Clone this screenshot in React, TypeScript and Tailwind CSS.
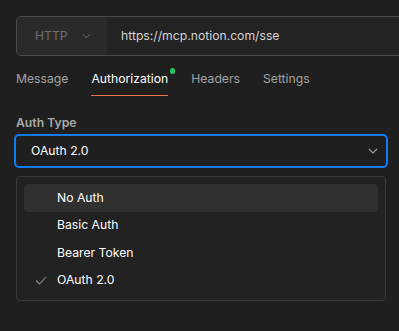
import React from 'react';

const tabs = ['Message', 'Authorization', 'Headers', 'Settings'];
const authOptions = ['No Auth', 'Basic Auth', 'Bearer Token', 'OAuth 2.0'];

function Chevron({ className }: { className?: string }) {
  return (
    <svg viewBox="0 0 10 6" className={className} fill="none" stroke="currentColor" strokeWidth="1.1">
      <path d="M1 1l4 4 4-4" />
    </svg>
  );
}

export default function App() {
  const selected = 'OAuth 2.0';
  const hovered = 'No Auth';

  return (
    <div className="w-[399px] h-[331px] overflow-hidden bg-[#1f1f1f] text-[12.2px] leading-[18px] font-['Inter',sans-serif]">
      <div className="pl-4 pt-4">
        {/* request bar */}
        <div className="flex h-[40px] w-[420px] rounded-[5px] border border-[#4b4b4b] overflow-hidden">
          <div className="flex w-[90px] items-center gap-[14px] bg-[#2a2a2a] pl-[18px] text-[#6e6e6e]">
            <span>HTTP</span>
            <Chevron className="w-[9px] h-[6px]" />
          </div>
          <div className="flex flex-1 items-center bg-[#232323] pl-[14px] text-[#d4d4d4]">
            https://mcp.notion.com/sse
          </div>
        </div>

        {/* tabs */}
        <div className="mt-[14px] flex gap-[23px] h-[26px]">
          {tabs.map((t) => {
            const active = t === 'Authorization';
            return (
              <div key={t} className="relative flex flex-col">
                <span className={active ? 'text-white' : 'text-[#a3a3a3]'}>{t}</span>
                {active && (
                  <>
                    <span className="mt-auto h-[1.5px] w-full bg-[#e8744c]" />
                    <span className="absolute -right-[7px] top-[-2px] h-[5.5px] w-[5.5px] rounded-full bg-[#22c55e]" />
                  </>
                )}
              </div>
            );
          })}
        </div>
      </div>

      <div className="px-[14px] pt-[18px]">
        <div className="pl-[2px] text-[12.2px] font-semibold text-[#a8a8a8]">Auth Type</div>
        <div className="mt-[2px] flex h-[34px] w-[374px] items-center justify-between rounded-[5px] border-2 border-[#0b7cf5] bg-[#1f1f1f] pl-[15px] pr-[8px] text-white">
          <span>{selected}</span>
          <Chevron className="w-[10px] h-[6px] text-[#a0a0a0]" />
        </div>

        <div className="ml-[2px] mt-[8px] w-[370px] rounded-[4px] border border-[#3a3a3a] bg-[#222222] px-[7px] pt-[7px] pb-[6px]">
          {authOptions.map((o) => (
            <div
              key={o}
              className={`flex h-[27.5px] items-center rounded-[4px] ${o === hovered ? 'bg-[#303030]' : ''}`}
            >
              <span className="flex w-[33px] justify-center pl-[1px]">
                {o === selected && (
                  <svg viewBox="0 0 12 9" className="w-[12px] h-[9px]" fill="none" stroke="#8a8a8a" strokeWidth="1.1">
                    <path d="M1 4.5l3.5 3.5L11 1" />
                  </svg>
                )}
              </span>
              <span className="text-white">{o}</span>
            </div>
          ))}
        </div>
      </div>
    </div>
  );
}
